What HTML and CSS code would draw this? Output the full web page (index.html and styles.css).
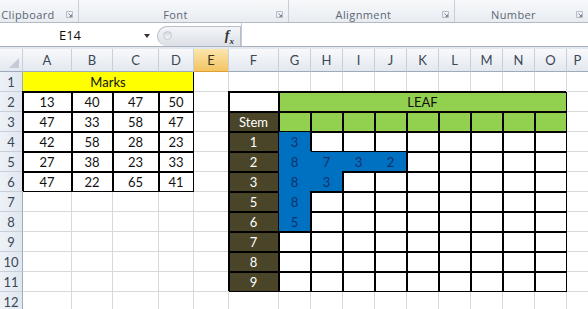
FILE: index.html
```html
<!DOCTYPE html>
<html lang="en">
<head>
    <meta charset="UTF-8">
    <title>Stem and leaf</title>
    <link rel="stylesheet" href="styles.css">
</head>
<body>

    <!-- Ribbon group labels -->
    <div class="ribbon">
        <div class="group g-clip">
            <span class="group-label">Clipboard</span>
            <svg class="launcher" width="7" height="7" viewBox="0 0 7 7"><path d="M0.5 0.5h6v6h-6z" fill="none" stroke="#b4bcc7"/><path d="M2.5 2.5l3 3M5.5 3.5v2h-2" fill="none" stroke="#7d8795"/></svg>
        </div>
        <div class="group g-font">
            <span class="group-label">Font</span>
            <svg class="launcher" width="7" height="7" viewBox="0 0 7 7"><path d="M0.5 0.5h6v6h-6z" fill="none" stroke="#b4bcc7"/><path d="M2.5 2.5l3 3M5.5 3.5v2h-2" fill="none" stroke="#7d8795"/></svg>
        </div>
        <div class="group g-align">
            <span class="group-label">Alignment</span>
            <svg class="launcher" width="7" height="7" viewBox="0 0 7 7"><path d="M0.5 0.5h6v6h-6z" fill="none" stroke="#b4bcc7"/><path d="M2.5 2.5l3 3M5.5 3.5v2h-2" fill="none" stroke="#7d8795"/></svg>
        </div>
        <div class="group g-num">
            <span class="group-label">Number</span>
            <svg class="launcher" width="7" height="7" viewBox="0 0 7 7"><path d="M0.5 0.5h6v6h-6z" fill="none" stroke="#b4bcc7"/><path d="M2.5 2.5l3 3M5.5 3.5v2h-2" fill="none" stroke="#7d8795"/></svg>
        </div>
    </div>

    <!-- Name box + formula bar -->
    <div class="fbar">
        <div class="namebox">E14</div>
        <div class="name-drop"><span class="tri"></span></div>
        <div class="fx-panel">
            <span class="fx-dot"></span>
            <span class="fx">f<sub>x</sub></span>
        </div>
        <div class="formula"></div>
    </div>
    <div class="fbar-gap"></div>

    <!-- Sheet -->
    <div class="sheet">
        <div class="c ch corner"><svg width="10" height="10" viewBox="0 0 10 10"><polygon points="10,0 10,10 0,10" fill="#c3cbd6"/></svg></div>
        <div class="c ch">A</div><div class="c ch">B</div><div class="c ch">C</div><div class="c ch">D</div><div class="c ch sel">E</div><div class="c ch">F</div><div class="c ch">G</div><div class="c ch">H</div><div class="c ch">I</div><div class="c ch">J</div><div class="c ch">K</div><div class="c ch">L</div><div class="c ch">M</div><div class="c ch">N</div><div class="c ch">O</div><div class="c ch">P</div>

        <div class="c rh">1</div>
        <div class="c mk">Marks</div><div class="c"></div><div class="c"></div>
        <div class="c"></div><div class="c"></div><div class="c"></div><div class="c"></div><div class="c"></div><div class="c"></div><div class="c"></div><div class="c"></div><div class="c"></div><div class="c"></div>

        <div class="c rh">2</div>
        <div class="c b">13</div><div class="c b">40</div><div class="c b">47</div><div class="c b">50</div><div class="c"></div>
        <div class="c b"></div><div class="c b leaf-head">LEAF</div><div class="c"></div>

        <div class="c rh">3</div>
        <div class="c b">47</div><div class="c b">33</div><div class="c b">58</div><div class="c b">47</div><div class="c"></div>
        <div class="c b stem">Stem</div>
        <div class="c b green"></div><div class="c b green"></div><div class="c b green"></div><div class="c b green"></div><div class="c b green"></div><div class="c b green"></div><div class="c b green"></div><div class="c b green"></div><div class="c b green"></div>
        <div class="c"></div>

        <div class="c rh">4</div>
        <div class="c b">42</div><div class="c b">58</div><div class="c b">28</div><div class="c b">23</div><div class="c"></div>
        <div class="c b stem">1</div>
        <div class="c leaf">3</div><div class="c b"></div><div class="c b"></div><div class="c b"></div><div class="c b"></div><div class="c b"></div><div class="c b"></div><div class="c b"></div><div class="c b"></div>
        <div class="c"></div>

        <div class="c rh">5</div>
        <div class="c b">27</div><div class="c b">38</div><div class="c b">23</div><div class="c b">33</div><div class="c"></div>
        <div class="c b stem">2</div>
        <div class="c leaf">8</div><div class="c leaf">7</div><div class="c leaf">3</div><div class="c leaf">2</div><div class="c b"></div><div class="c b"></div><div class="c b"></div><div class="c b"></div><div class="c b"></div>
        <div class="c"></div>

        <div class="c rh">6</div>
        <div class="c b">47</div><div class="c b">22</div><div class="c b">65</div><div class="c b">41</div><div class="c"></div>
        <div class="c b stem">3</div>
        <div class="c leaf">8</div><div class="c leaf">3</div><div class="c b"></div><div class="c b"></div><div class="c b"></div><div class="c b"></div><div class="c b"></div><div class="c b"></div><div class="c b"></div>
        <div class="c"></div>

        <div class="c rh">7</div>
        <div class="c"></div><div class="c"></div><div class="c"></div><div class="c"></div><div class="c"></div>
        <div class="c b stem">5</div>
        <div class="c leaf">8</div><div class="c b"></div><div class="c b"></div><div class="c b"></div><div class="c b"></div><div class="c b"></div><div class="c b"></div><div class="c b"></div><div class="c b"></div>
        <div class="c"></div>

        <div class="c rh">8</div>
        <div class="c"></div><div class="c"></div><div class="c"></div><div class="c"></div><div class="c"></div>
        <div class="c b stem">6</div>
        <div class="c leaf">5</div><div class="c b"></div><div class="c b"></div><div class="c b"></div><div class="c b"></div><div class="c b"></div><div class="c b"></div><div class="c b"></div><div class="c b"></div>
        <div class="c"></div>

        <div class="c rh">9</div>
        <div class="c"></div><div class="c"></div><div class="c"></div><div class="c"></div><div class="c"></div>
        <div class="c b stem">7</div>
        <div class="c b"></div><div class="c b"></div><div class="c b"></div><div class="c b"></div><div class="c b"></div><div class="c b"></div><div class="c b"></div><div class="c b"></div><div class="c b"></div>
        <div class="c"></div>

        <div class="c rh">10</div>
        <div class="c"></div><div class="c"></div><div class="c"></div><div class="c"></div><div class="c"></div>
        <div class="c b stem">8</div>
        <div class="c b"></div><div class="c b"></div><div class="c b"></div><div class="c b"></div><div class="c b"></div><div class="c b"></div><div class="c b"></div><div class="c b"></div><div class="c b"></div>
        <div class="c"></div>

        <div class="c rh">11</div>
        <div class="c"></div><div class="c"></div><div class="c"></div><div class="c"></div><div class="c"></div>
        <div class="c b stem">9</div>
        <div class="c b"></div><div class="c b"></div><div class="c b"></div><div class="c b"></div><div class="c b"></div><div class="c b"></div><div class="c b"></div><div class="c b"></div><div class="c b"></div>
        <div class="c"></div>

        <div class="c rh">12</div>
        <div class="c"></div><div class="c"></div><div class="c"></div><div class="c"></div><div class="c"></div><div class="c"></div><div class="c"></div><div class="c"></div><div class="c"></div><div class="c"></div><div class="c"></div><div class="c"></div><div class="c"></div><div class="c"></div><div class="c"></div><div class="c"></div>
    </div>

</body>
</html>
```

FILE: styles.css
```css
body {
    margin: 0;
    background-color: #ffffff;
    font-family: Lato, "Noto Sans", sans-serif;
    overflow: hidden;
}

/* Ribbon */
.ribbon {
    display: flex;
    height: 22px;
    background: linear-gradient(#f7f9fb, #e8ecf1);
    border-bottom: 1px solid #b3bac5;
}

.group {
    display: flex;
    align-items: center;
    padding-top: 6px;
    box-sizing: border-box;
    border-right: 1px solid #c9ced6;
}
.g-clip { width: 79px; }
.g-font { width: 210px; }
.g-align { width: 166px; }
.g-num { flex: 1; border-right: none; }

.group-label {
    flex: 1;
    text-align: center;
    font-family: "Open Sans", sans-serif;
    font-size: 11px;
    letter-spacing: 0.4px;
    color: #5d6674;
}
.g-clip .group-label { padding-right: 6px; }

.launcher {
    margin: 0 5px 0 4px;
}

/* Formula bar */
.fbar {
    display: flex;
    height: 23px;
    background-color: #ffffff;
    border-bottom: 1px solid #a9b1bc;
}

.namebox {
    width: 140px;
    display: flex;
    align-items: center;
    justify-content: center;
    font-family: "Open Sans", sans-serif;
    font-size: 13px;
    color: #111;
}

.name-drop {
    width: 17px;
    display: flex;
    align-items: center;
    padding-top: 3px;
    box-sizing: border-box;
}
.tri {
    width: 0;
    height: 0;
    margin-left: 4px;
    border-left: 3px solid transparent;
    border-right: 3px solid transparent;
    border-top: 4px solid #333;
}

.fx-panel {
    width: 84px;
    margin-top: 3px;
    display: flex;
    align-items: center;
    justify-content: space-between;
    padding: 0 6px 0 5px;
    box-sizing: border-box;
    background: linear-gradient(#f3f5f8, #dce1e7);
    border: 1px solid #b7bec8;
    border-bottom: none;
    border-radius: 10px 0 0 10px;
}
.fx-dot {
    width: 7px;
    height: 7px;
    border-radius: 50%;
    background: linear-gradient(#d4d9df, #f5f7f9);
    border: 1px solid #c3c9d1;
    margin-top: -3px;
}
.fx {
    font-family: "Liberation Serif", serif;
    font-style: italic;
    font-weight: bold;
    font-size: 14px;
    color: #333;
}
.fx sub {
    font-size: 9px;
}

.formula {
    flex: 1;
    border-left: 1px solid #c4cad3;
}

.fbar-gap {
    height: 2px;
    background-color: #e3e8ee;
}

/* Sheet */
.sheet {
    display: grid;
    grid-template-columns: 23px 49px 41px 46px 35px 35px 50px repeat(9, 32px) 22px;
    grid-template-rows: 23px;
    grid-auto-rows: 20px;
    font-size: 13px;
    color: #111;
}

.c {
    box-sizing: border-box;
    border-right: 1px solid #d9d9d9;
    border-bottom: 1px solid #d9d9d9;
    display: flex;
    align-items: center;
    justify-content: center;
    background-color: #ffffff;
}

.ch {
    background: linear-gradient(#f8f9fb, #e3e8ef);
    border-right-color: #c7cfd9;
    border-bottom-color: #9eabbb;
    color: #3b4757;
}
.ch.sel {
    background: linear-gradient(#fbe6ad, #f2c462);
    border-bottom-color: #e09f33;
    color: #3b3320;
}
.corner {
    justify-content: flex-end;
    align-items: flex-end;
    padding: 0 3px 3px 0;
}

.rh {
    background: linear-gradient(90deg, #eef2f7, #e1e7ef);
    border-right-color: #9eabbb;
    border-bottom-color: #c7cfd9;
    color: #3b4757;
}

/* black cell borders, about 2px: own right/bottom + inset and outer shadow on top/left */
.b {
    border-right-color: #000;
    border-bottom-color: #000;
    box-shadow: -1px -1px 0 0 #000, inset 1px 1px 0 0 #000;
}

.mk {
    grid-column: span 4;
    background-color: #ffff00;
    border-right-color: #000;
    border-bottom-color: #000;
}

.leaf-head {
    grid-column: span 9;
    background-color: #92d050;
}
.green {
    background-color: #92d050;
}

.stem {
    background-color: #4a4529;
    color: #ffffff;
}

.leaf {
    background-color: #0070c0;
    border-right-color: #0070c0;
    border-bottom-color: #0070c0;
    color: #10306c;
}
```
